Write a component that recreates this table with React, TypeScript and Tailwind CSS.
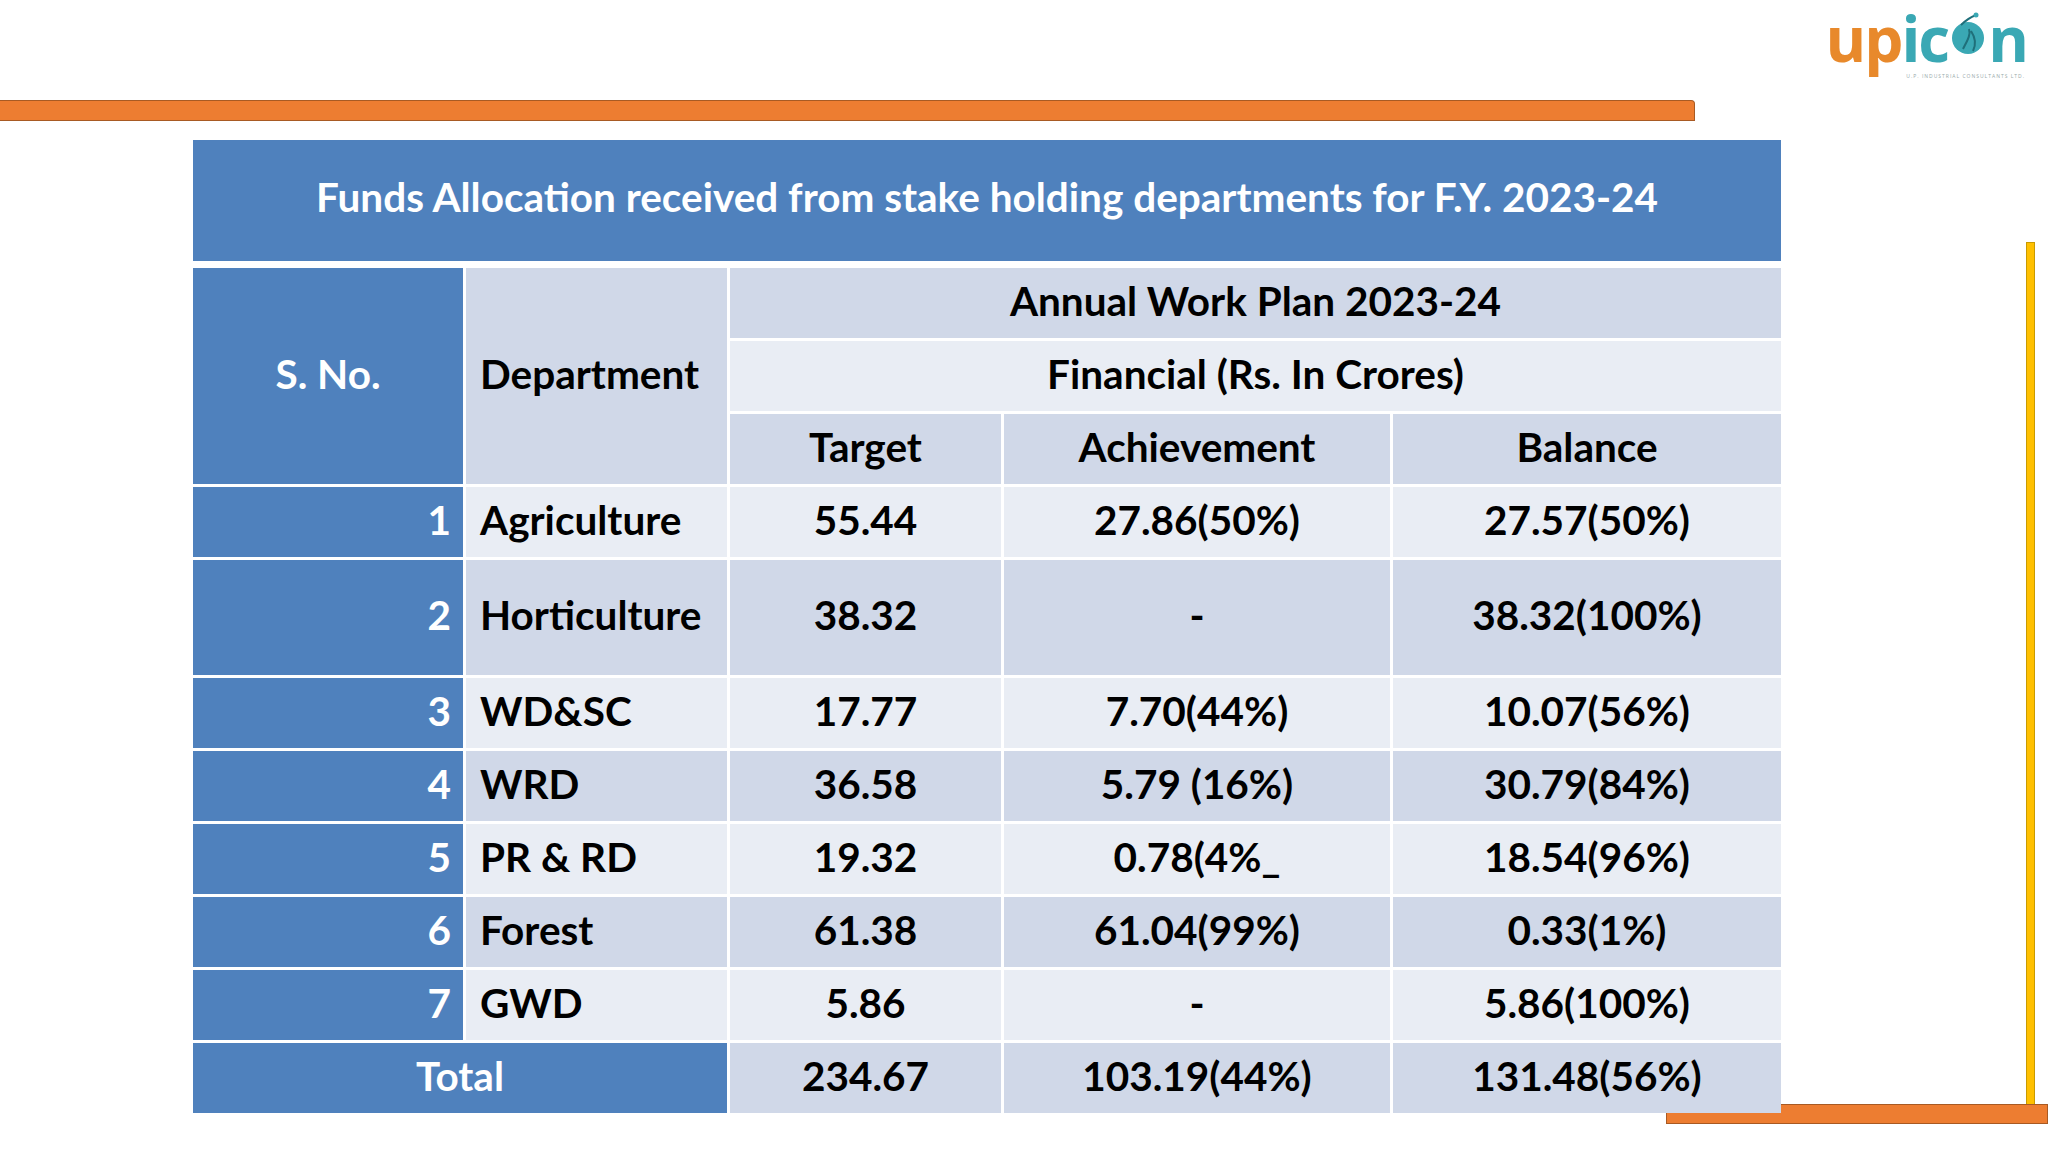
import React from "react";

const DARK = "bg-[#d0d8e8]";
const LIGHT = "bg-[#e9edf4]";

type Row = { n: string; dept: string; t: string; a: string; b: string };

const rows: Row[] = [
  { n: "1", dept: "Agriculture", t: "55.44", a: "27.86(50%)", b: "27.57(50%)" },
  { n: "2", dept: "Horticulture", t: "38.32", a: "-", b: "38.32(100%)" },
  { n: "3", dept: "WD&SC", t: "17.77", a: "7.70(44%)", b: "10.07(56%)" },
  { n: "4", dept: "WRD", t: "36.58", a: "5.79 (16%)", b: "30.79(84%)" },
  { n: "5", dept: "PR & RD", t: "19.32", a: "0.78(4%_", b: "18.54(96%)" },
  { n: "6", dept: "Forest", t: "61.38", a: "61.04(99%)", b: "0.33(1%)" },
  { n: "7", dept: "GWD", t: "5.86", a: "-", b: "5.86(100%)" },
];

function Logo() {
  return (
    <div className="flex flex-col items-end">
      <div className="flex items-end leading-[1.25] font-['Open_Sans',sans-serif] font-bold text-[62px] tracking-[-2px]">
        <span className="text-[#e8892b]">up</span>
        <span className="text-[#3aa8b4]">ic</span>
        <svg width="38" height="46" viewBox="0 0 38 46" className="mb-[21px] mx-[1px]">
          <circle cx="19" cy="27" r="16" fill="#3aa8b4" />
          <path d="M12 14 C16 10 22 6 27 4 M20 18 C22 24 18 30 14 38 M22 20 C26 26 28 32 24 40" stroke="#1f6f7a" strokeWidth="2" fill="none" />
          <circle cx="27" cy="4" r="2.5" fill="#3aa8b4" />
        </svg>
        <span className="text-[#3aa8b4]">n</span>
      </div>
      <div className="mt-[-4px] mr-[2px] text-[5px] tracking-[1px] text-[#99aaaa] font-['Open_Sans',sans-serif] leading-none">
        U.P. INDUSTRIAL CONSULTANTS LTD.
      </div>
    </div>
  );
}

export default function App() {
  const cell = "flex items-center font-bold text-[40.5px] text-black leading-none pb-[4px]";
  const blue = "bg-[#4f81bd] text-white";
  return (
    <div className="relative w-[2048px] h-[1153px] bg-white overflow-hidden font-['Lato',sans-serif]">
      {/* decorations */}
      <div className="absolute left-[2026px] top-[242px] w-[9px] h-[864px] bg-[#ffc000] border border-[#c99a00]" />
      <div className="absolute left-[1666px] top-[1104px] w-[382px] h-[20px] bg-[#ed7d31] border border-[#a85a23]" />

      {/* top bar with logo */}
      <div className="relative h-[100px]">
        <div className="absolute right-[21px] top-[0px]">
          <Logo />
        </div>
      </div>
      <div className="w-[1695px] h-[21px] bg-[#ed7d31] border-y border-r border-[#a85a23] rounded-tr-[4px]" />

      {/* table */}
      <div className="relative ml-[193px] mt-[19px] w-[1588px]">
        <div className="h-[121px] bg-[#4f81bd] flex items-center justify-center text-white font-bold text-[40.5px] pb-[6px]">
          Funds Allocation received from stake holding departments for F.Y. 2023-24
        </div>
        <div className="h-[7px] bg-white" />
        <div className="grid grid-cols-[270px_261px_271px_386px_388px] grid-rows-[70px_70px_70px_70px_115px_70px_70px_70px_70px_70px_70px] gap-[3px] bg-white">
          <div className={`${cell} ${blue} row-span-3 justify-center`}>S. No.</div>
          <div className={`${cell} ${DARK} row-span-3 pl-[14px]`}>Department</div>
          <div className={`${cell} ${DARK} col-span-3 justify-center`}>Annual Work Plan 2023-24</div>
          <div className={`${cell} ${LIGHT} col-span-3 justify-center`}>Financial (Rs. In Crores)</div>
          <div className={`${cell} ${DARK} justify-center`}>Target</div>
          <div className={`${cell} ${DARK} justify-center`}>Achievement</div>
          <div className={`${cell} ${DARK} justify-center`}>Balance</div>
          {rows.map((r, i) => {
            const bg = i % 2 === 0 ? LIGHT : DARK;
            return (
              <React.Fragment key={r.n}>
                <div className={`${cell} ${blue} justify-end pr-[12px]`}>{r.n}</div>
                <div className={`${cell} ${bg} pl-[14px]`}>{r.dept}</div>
                <div className={`${cell} ${bg} justify-center`}>{r.t}</div>
                <div className={`${cell} ${bg} justify-center`}>{r.a}</div>
                <div className={`${cell} ${bg} justify-center`}>{r.b}</div>
              </React.Fragment>
            );
          })}
          <div className={`${cell} ${blue} col-span-2 justify-center`}>Total</div>
          <div className={`${cell} ${DARK} justify-center`}>234.67</div>
          <div className={`${cell} ${DARK} justify-center`}>103.19(44%)</div>
          <div className={`${cell} ${DARK} justify-center`}>131.48(56%)</div>
        </div>
      </div>
    </div>
  );
}
